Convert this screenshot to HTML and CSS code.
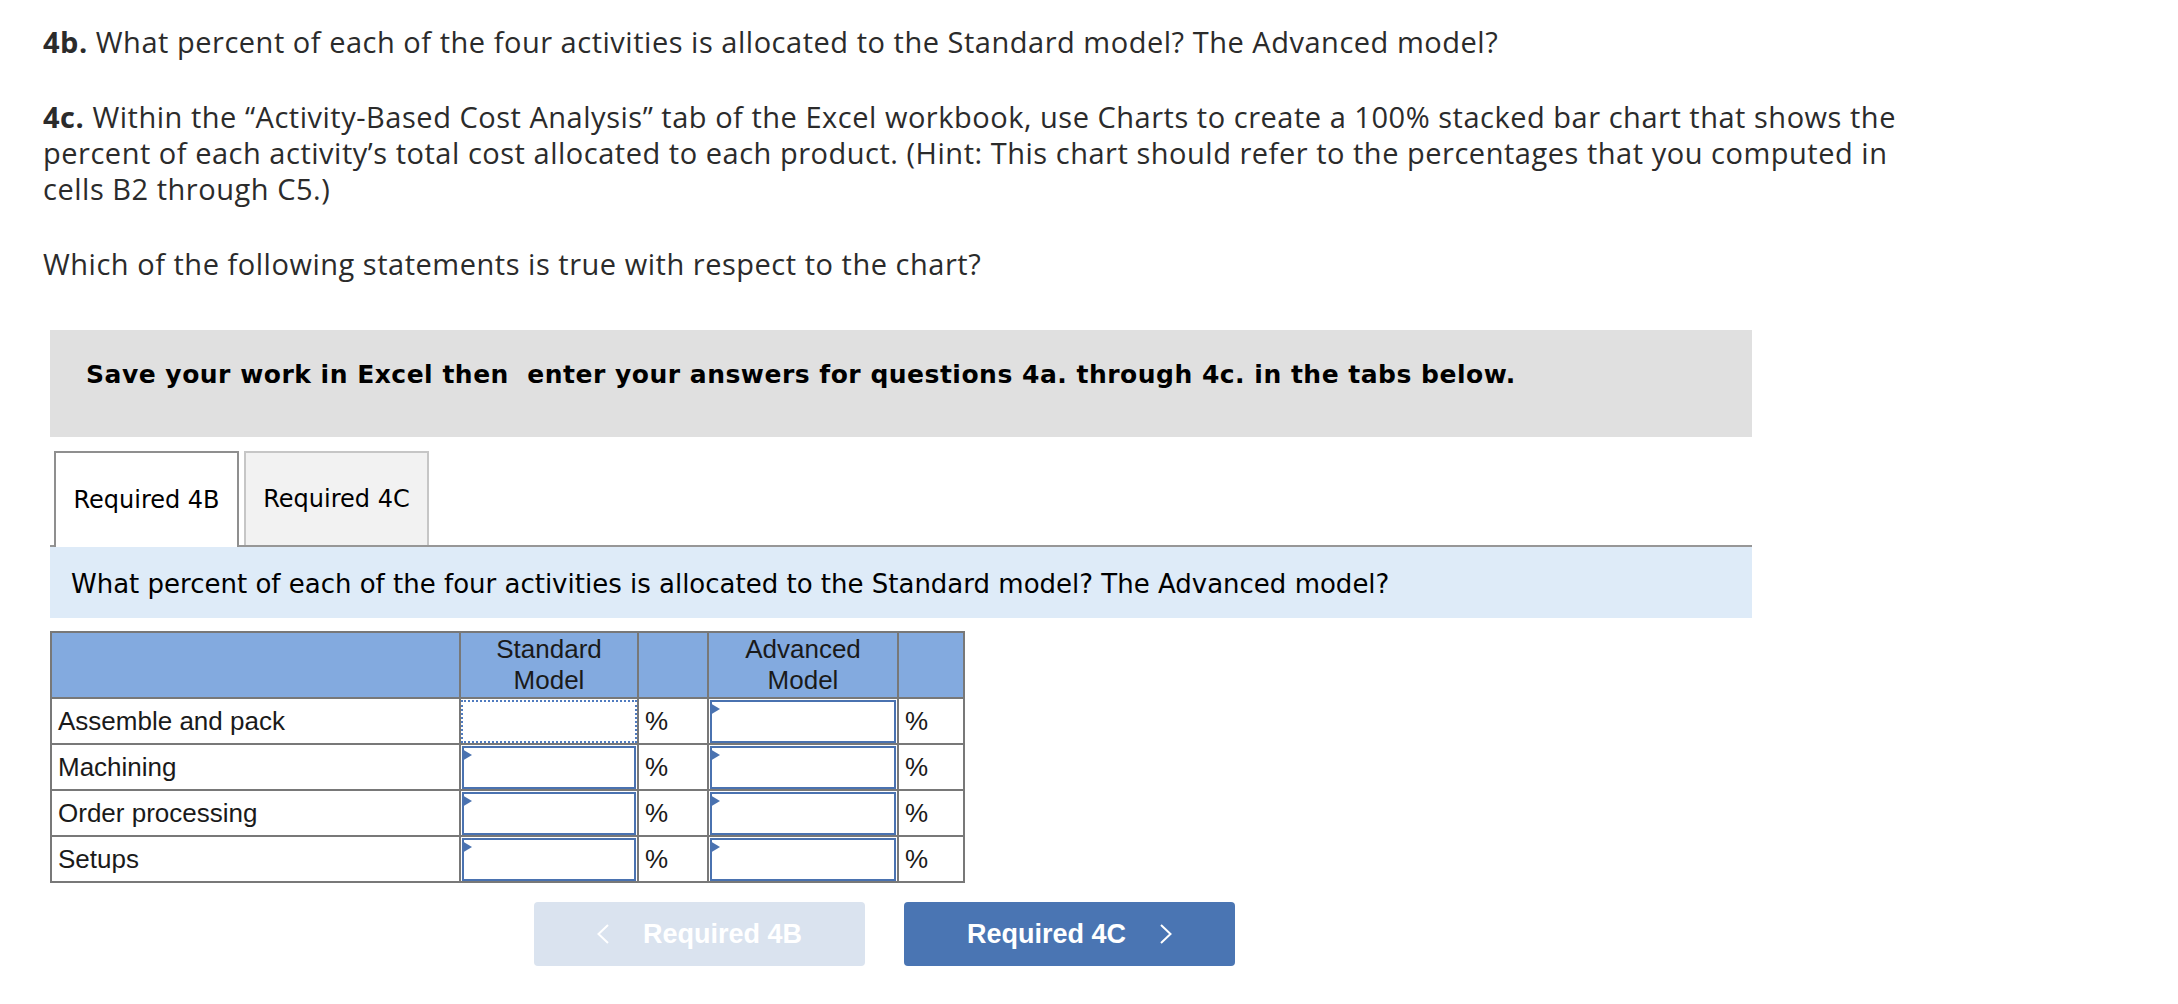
FILE: index.html
```html
<!DOCTYPE html>
<html lang="en">
  <head>
    <meta charset="UTF-8" />
    <meta name="viewport" content="width=device-width, initial-scale=1.0" />
    <title>Required 4B</title>
    <link rel="stylesheet" href="styles.css">
  </head>
  <body>
    <div class="question">
      <p><b>4b.</b> What percent of each of the four activities is allocated to the Standard model? The Advanced model?</p>
      <p><b>4c.</b> Within the “Activity-Based Cost Analysis” tab of the Excel workbook, use Charts to create a 100% stacked bar chart that shows the<br>percent of each activity’s total cost allocated to each product. (Hint: This chart should refer to the percentages that you computed in<br>cells B2 through C5.)</p>
      <p>Which of the following statements is true with respect to the chart?</p>
    </div>

    <div class="exercise">
      <div class="instructions">Save your work in Excel then&nbsp; enter your answers for questions 4a. through 4c. in the tabs below.</div>

      <div class="tabs">
        <div class="tab is-active">Required 4B</div>
        <div class="tab">Required 4C</div>
      </div>

      <div class="prompt">What percent of each of the four activities is allocated to the Standard model? The Advanced model?</div>

      <table class="answers">
        <colgroup>
          <col class="col-label">
          <col class="col-std">
          <col class="col-unit">
          <col class="col-adv">
          <col class="col-unit2">
        </colgroup>
        <thead>
          <tr>
            <th></th>
            <th>Standard<br>Model</th>
            <th></th>
            <th>Advanced<br>Model</th>
            <th></th>
          </tr>
        </thead>
        <tbody>
          <tr>
            <td class="label">Assemble and pack</td>
            <td class="entry"><div class="box is-focused"></div></td>
            <td class="unit">%</td>
            <td class="entry"><div class="box"></div></td>
            <td class="unit">%</td>
          </tr>
          <tr>
            <td class="label">Machining</td>
            <td class="entry"><div class="box"></div></td>
            <td class="unit">%</td>
            <td class="entry"><div class="box"></div></td>
            <td class="unit">%</td>
          </tr>
          <tr>
            <td class="label">Order processing</td>
            <td class="entry"><div class="box"></div></td>
            <td class="unit">%</td>
            <td class="entry"><div class="box"></div></td>
            <td class="unit">%</td>
          </tr>
          <tr>
            <td class="label">Setups</td>
            <td class="entry"><div class="box"></div></td>
            <td class="unit">%</td>
            <td class="entry"><div class="box"></div></td>
            <td class="unit">%</td>
          </tr>
        </tbody>
      </table>

      <div class="nav">
        <button class="nav-btn" disabled>
          <svg class="chev" width="12" height="20" viewBox="0 0 12 20"><polyline points="11,1 1.5,10 11,19" /></svg>
          <span>Required 4B</span>
        </button>
        <button class="nav-btn is-next">
          <span>Required 4C</span>
          <svg class="chev" width="12" height="20" viewBox="0 0 12 20"><polyline points="1,1 10.5,10 1,19" /></svg>
        </button>
      </div>
    </div>
  </body>
</html>
```

FILE: styles.css
```css
body {
  margin: 0;
  background-color: #fff;
  color: #2b2b2b;
}

/* question text above the exercise */
.question {
  padding: 24px 0 0 43px;
  font-family: "Open Sans", Lato, sans-serif;
  font-size: 29px;
  letter-spacing: 0.52px;
  line-height: 36px;
}

.question p {
  margin: 0 0 39px;
}

.question b {
  font-weight: 700;
}

/* margin collapses with the last paragraph's 39px */
.exercise {
  margin: 48px 0 0 50px;
  width: 1702px;
  font-family: "DejaVu Sans", Verdana, sans-serif;
  color: #000;
}

.instructions {
  background-color: #e0e0e0;
  font-size: 25px;
  font-weight: bold;
  letter-spacing: 0.5px;
  line-height: 29px;
  padding: 30px 36px 48px;
}

/* tab strip */
.tabs {
  display: flex;
  gap: 5px;
  margin-top: 14px;
  padding-left: 4px;
  border-bottom: 2px solid #979797;
}

.tab {
  width: 185px;
  height: 94px;
  box-sizing: border-box;
  display: flex;
  align-items: center;
  justify-content: center;
  font-size: 24px;
  background-color: #f2f2f2;
  border: 2px solid #c6c6c6;
  border-bottom: none;
}

.tab.is-active {
  background-color: #fff;
  border-color: #8f8f8f;
  height: 96px;
  margin-bottom: -2px;
}

.prompt {
  background-color: #deebf8;
  font-size: 26px;
  line-height: 30px;
  padding: 22px 21px 19px;
}

/* answer grid */
.answers {
  margin-top: 13px;
  border-collapse: collapse;
  table-layout: fixed;
  width: 913px;
  font-family: "Liberation Sans", Arial, sans-serif;
  color: #1a1a1a;
}

.col-label { width: 409px; }
.col-std { width: 178px; }
.col-unit { width: 70px; }
.col-adv { width: 190px; }
.col-unit2 { width: 66px; }

.answers th,
.answers td {
  border: 2px solid #787878;
  padding: 0;
}

.answers th {
  background-color: #83aadf;
  height: 63px;
  font-size: 26px;
  font-weight: normal;
  line-height: 31px;
  vertical-align: top;
  padding-top: 1px;
}

.answers td {
  height: 44px;
  font-size: 26px;
}

.answers td.label {
  padding-left: 6px;
}

.answers td.unit {
  padding-left: 6px;
}

.answers td.entry {
  padding: 0 1px;
}

.box {
  position: relative;
  height: 43px;
  box-sizing: border-box;
  border: 2px solid #4a72b0;
  background-color: #fff;
}

/* little flag in the corner of the entry box */
.box::before {
  content: "";
  position: absolute;
  left: -2px;
  top: 1px;
  border-left: 10px solid #4a72b0;
  border-top: 6px solid transparent;
  border-bottom: 6px solid transparent;
}

.box.is-focused {
  border: 2.5px dotted #4f7bc0;
  margin: 0 -1px;
}

.box.is-focused::before {
  display: none;
}

/* prev / next */
.nav {
  display: flex;
  gap: 39px;
  margin-top: 19px;
  padding-left: 484px;
}

.nav-btn {
  width: 331px;
  height: 64px;
  display: flex;
  align-items: center;
  justify-content: center;
  gap: 34px;
  border: none;
  border-radius: 4px;
  background-color: #4a75b3;
  color: #fff;
  font-family: "Liberation Sans", Arial, sans-serif;
  font-size: 27px;
  font-weight: bold;
  padding: 0;
}

.nav-btn:disabled {
  background-color: #dae3ef;
}

.chev polyline {
  fill: none;
  stroke: #fff;
  stroke-width: 2;
}
```
